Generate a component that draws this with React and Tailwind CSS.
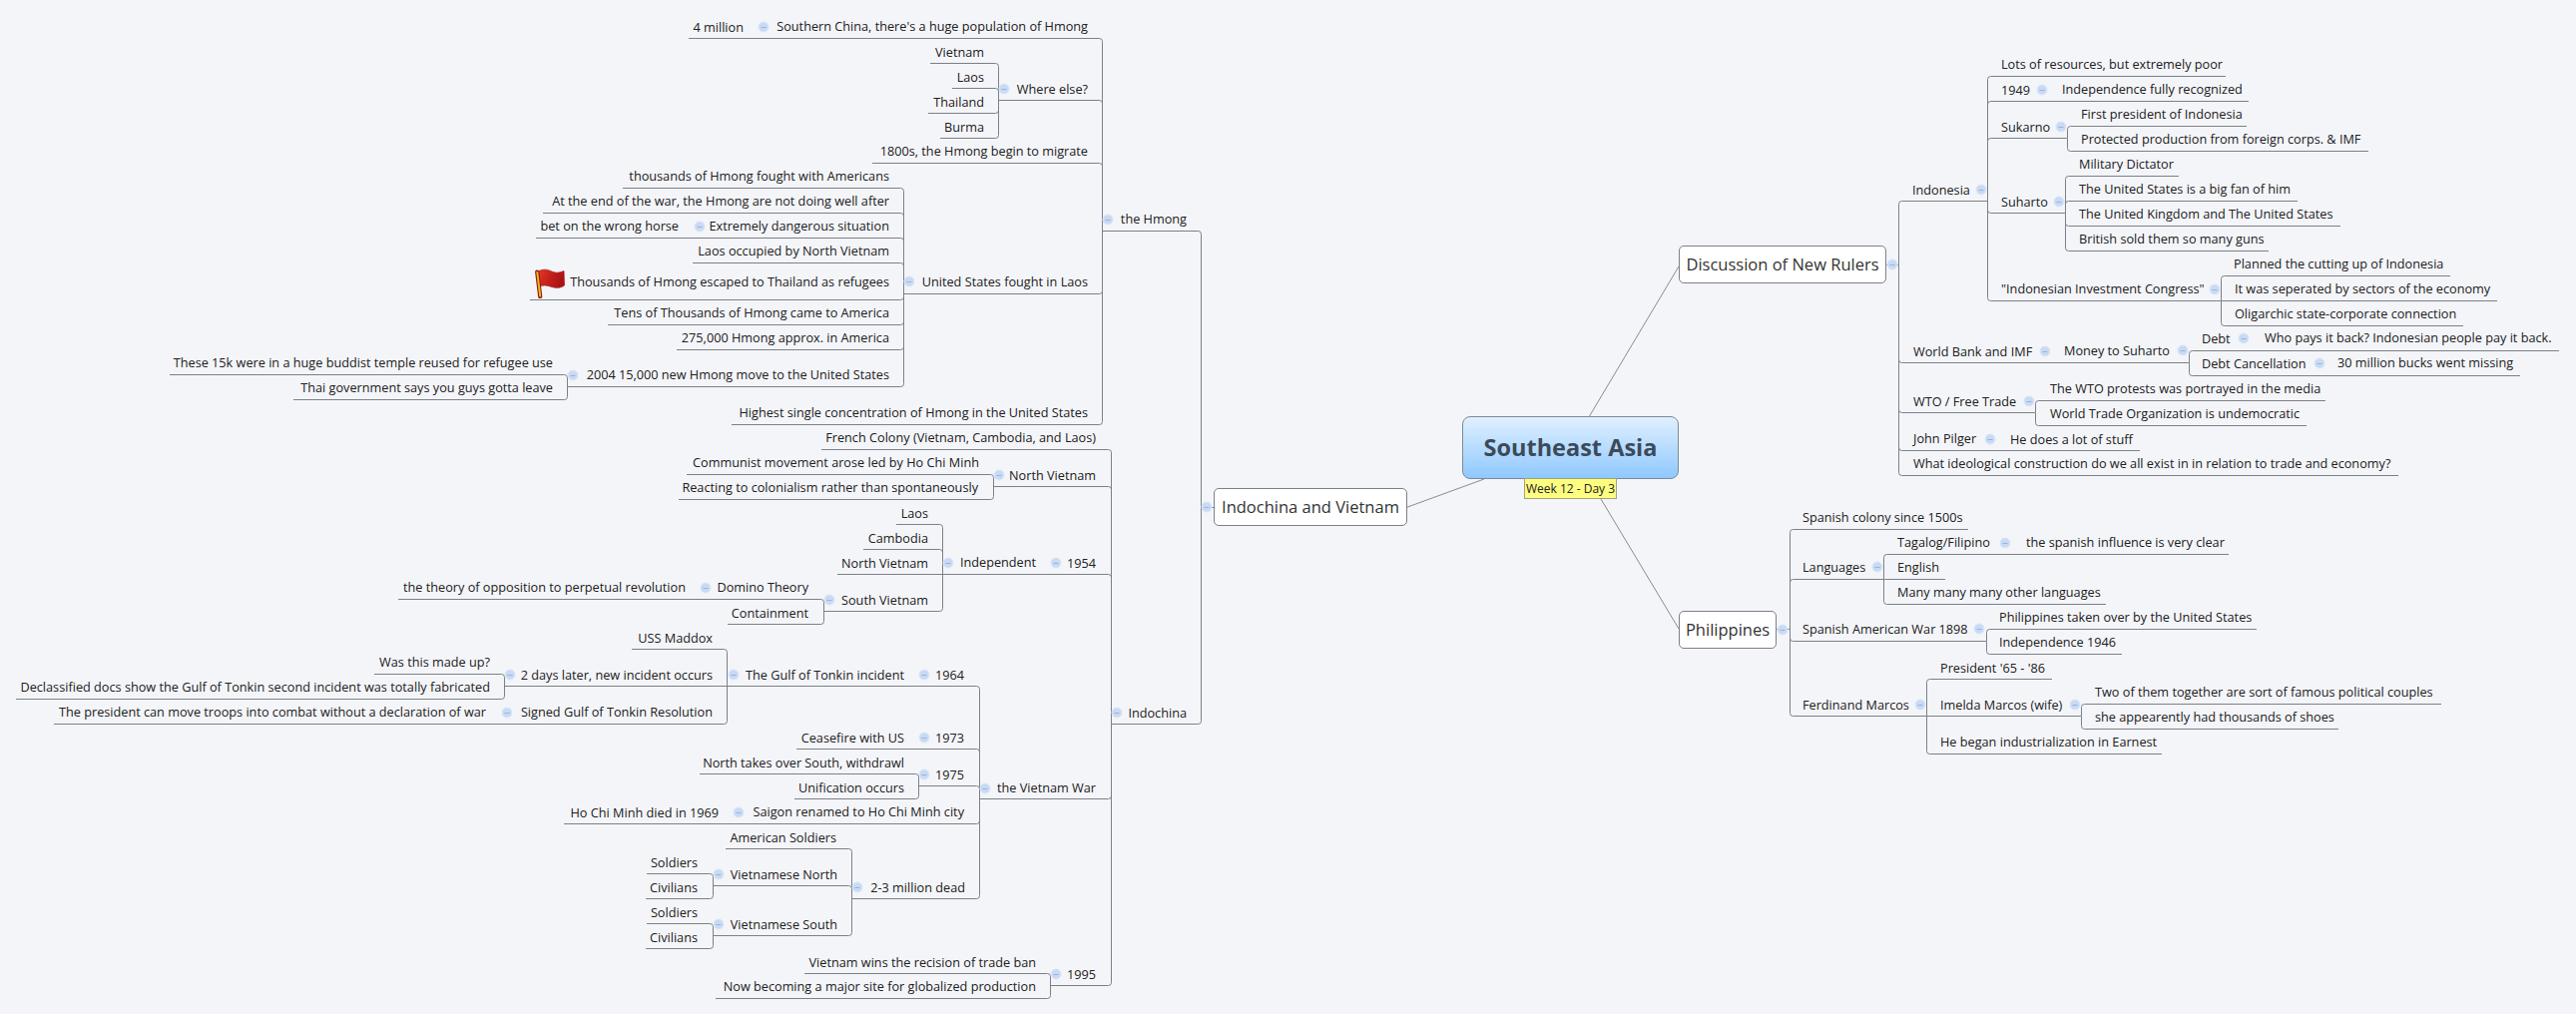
import React from 'react';

// [spine x, y where the parent joins, [[far end x, y], ...]]
const branches = [
    [1203, 508, [[1104, 231], [1113, 725]]],
    [1104, 231, [[690, 38], [1000, 100], [874, 163], [905, 294], [733, 425]]],
    [1000, 100, [[932, 63], [954, 88], [930, 113], [942, 138]]],
    [905, 294, [[624, 188], [544, 213], [537, 238], [694, 263], [531, 300], [609, 325], [678, 350], [568, 387]]],
    [568, 387, [[170, 375], [294, 400]]],
    [1113, 725, [[823, 450], [995, 487], [944, 575], [981, 800], [1052, 987]]],
    [995, 487, [[688, 475], [680, 500]]],
    [944, 575, [[898, 525], [865, 550], [839, 575], [825, 612]]],
    [825, 612, [[399, 600], [729, 625]]],
    [981, 800, [[728, 687], [798, 750], [920, 787], [565, 825], [853, 900]]],
    [728, 687, [[633, 650], [505, 687], [54, 725]]],
    [505, 687, [[375, 675], [16, 700]]],
    [920, 787, [[701, 775], [796, 800]]],
    [853, 900, [[727, 850], [714, 887], [714, 937]]],
    [714, 887, [[648, 875], [647, 900]]],
    [714, 937, [[648, 925], [647, 950]]],
    [1052, 987, [[806, 975], [717, 1000]]],
    [1902, 265, [[1991, 201], [2193, 363], [2039, 413], [2144, 451], [2403, 476]]],
    [1991, 201, [[2230, 76], [2253, 101], [2071, 138], [2069, 213], [2225, 301]]],
    [2071, 138, [[2251, 126], [2373, 151]]],
    [2069, 213, [[2183, 176], [2302, 201], [2345, 226], [2273, 251]]],
    [2225, 301, [[2455, 276], [2502, 301], [2468, 326]]],
    [2193, 363, [[2564, 351], [2525, 376]]],
    [2039, 413, [[2330, 401], [2311, 426]]],
    [1793, 630, [[1972, 530], [1887, 580], [1990, 642], [1930, 717]]],
    [1887, 580, [[2233, 555], [1949, 580], [2110, 605]]],
    [1990, 642, [[2261, 630], [2126, 655]]],
    [1930, 717, [[2056, 680], [2085, 717], [2166, 755]]],
    [2085, 717, [[2446, 705], [2343, 730]]],
];

// left side of the map: x is where the text ends
const leftLabels = [
    [745, 27, '4 million'], [1090, 26, "Southern China, there's a huge population of Hmong"],
    [986, 52, 'Vietnam'], [986, 77, 'Laos'], [986, 102, 'Thailand'], [986, 127, 'Burma'],
    [1090, 89, 'Where else?'], [1090, 151, '1800s, the Hmong begin to migrate'],
    [891, 176, 'thousands of Hmong fought with Americans'],
    [891, 201, 'At the end of the war, the Hmong are not doing well after'],
    [680, 226, 'bet on the wrong horse'], [891, 226, 'Extremely dangerous situation'],
    [891, 251, 'Laos occupied by North Vietnam'],
    [891, 282, 'Thousands of Hmong escaped to Thailand as refugees'],
    [891, 313, 'Tens of Thousands of Hmong came to America'],
    [891, 338, '275,000 Hmong approx. in America'],
    [891, 375, '2004 15,000 new Hmong move to the United States'],
    [554, 363, 'These 15k were in a huge buddist temple reused for refugee use'],
    [554, 388, 'Thai government says you guys gotta leave'],
    [1090, 282, 'United States fought in Laos'],
    [1090, 413, 'Highest single concentration of Hmong in the United States'],
    [1189, 219, 'the Hmong'], [1189, 714, 'Indochina'],
    [1098, 438, 'French Colony (Vietnam, Cambodia, and Laos)'],
    [1098, 476, 'North Vietnam'],
    [981, 463, 'Communist movement arose led by Ho Chi Minh'],
    [980, 488, 'Reacting to colonialism rather than spontaneously'],
    [930, 514, 'Laos'], [930, 539, 'Cambodia'], [930, 564, 'North Vietnam'], [930, 601, 'South Vietnam'],
    [1038, 563, 'Independent'], [1098, 564, '1954'],
    [687, 588, 'the theory of opposition to perpetual revolution'],
    [810, 588, 'Domino Theory'], [810, 614, 'Containment'],
    [714, 639, 'USS Maddox'], [714, 676, '2 days later, new incident occurs'],
    [491, 663, 'Was this made up?'],
    [491, 688, 'Declassified docs show the Gulf of Tonkin second incident was totally fabricated'],
    [487, 713, 'The president can move troops into combat without a declaration of war'],
    [714, 713, 'Signed Gulf of Tonkin Resolution'],
    [906, 676, 'The Gulf of Tonkin incident'], [966, 676, '1964'],
    [906, 739, 'Ceasefire with US'], [966, 739, '1973'], [966, 776, '1975'],
    [906, 764, 'North takes over South, withdrawl'], [906, 789, 'Unification occurs'],
    [720, 814, 'Ho Chi Minh died in 1969'], [966, 813, 'Saigon renamed to Ho Chi Minh city'],
    [967, 889, '2-3 million dead'], [1098, 789, 'the Vietnam War'],
    [838, 839, 'American Soldiers'], [839, 876, 'Vietnamese North'], [839, 926, 'Vietnamese South'],
    [699, 864, 'Soldiers'], [699, 889, 'Civilians'], [699, 914, 'Soldiers'], [699, 939, 'Civilians'],
    [1038, 964, 'Vietnam wins the recision of trade ban'],
    [1038, 988, 'Now becoming a major site for globalized production'],
    [1098, 976, '1995'],
];

// right side of the map: x is where the text starts
const rightLabels = [
    [1916, 190, 'Indonesia'],
    [2005, 64, 'Lots of resources, but extremely poor'],
    [2005, 90, '1949'], [2066, 89, 'Independence fully recognized'],
    [2005, 127, 'Sukarno'], [2085, 114, 'First president of Indonesia'],
    [2085, 139, 'Protected production from foreign corps. & IMF'],
    [2005, 202, 'Suharto'], [2083, 164, 'Military Dictator'],
    [2083, 189, 'The United States is a big fan of him'],
    [2083, 214, 'The United Kingdom and The United States'],
    [2083, 239, 'British sold them so many guns'],
    [2005, 289, '"Indonesian Investment Congress"'],
    [2238, 264, 'Planned the cutting up of Indonesia'],
    [2239, 289, 'It was seperated by sectors of the economy'],
    [2239, 314, 'Oligarchic state-corporate connection'],
    [1917, 352, 'World Bank and IMF'], [2068, 351, 'Money to Suharto'],
    [2206, 339, 'Debt'], [2269, 338, 'Who pays it back? Indonesian people pay it back.'],
    [2206, 364, 'Debt Cancellation'], [2342, 363, '30 million bucks went missing'],
    [1917, 402, 'WTO / Free Trade'], [2054, 389, 'The WTO protests was portrayed in the media'],
    [2054, 414, 'World Trade Organization is undemocratic'],
    [1917, 439, 'John Pilger'], [2014, 440, 'He does a lot of stuff'],
    [1917, 464, 'What ideological construction do we all exist in in relation to trade and economy?'],
    [1806, 518, 'Spanish colony since 1500s'], [1806, 568, 'Languages'],
    [1901, 543, 'Tagalog/Filipino'], [2030, 543, 'the spanish influence is very clear'],
    [1901, 568, 'English'], [1901, 593, 'Many many many other languages'],
    [1806, 630, 'Spanish American War 1898'],
    [2003, 618, 'Philippines taken over by the United States'], [2003, 643, 'Independence 1946'],
    [1806, 706, 'Ferdinand Marcos'], [1944, 669, "President '65 - '86"],
    [1944, 706, 'Imelda Marcos (wife)'], [1944, 743, 'He began industrialization in Earnest'],
    [2099, 693, 'Two of them together are sort of famous political couples'],
    [2099, 718, 'she appearently had thousands of shoes'],
];

const minusIcons = [
    [765, 27], [1006, 89], [701, 227], [911, 282], [574, 376], [1110, 220], [1209, 508], [1119, 714],
    [1001, 476], [950, 564], [1058, 564], [831, 601], [707, 589], [926, 676], [735, 676], [511, 676],
    [508, 714], [926, 739], [926, 776], [740, 814], [987, 790], [859, 889], [720, 876], [720, 926],
    [1058, 976], [1896, 265], [1985, 190], [2046, 90], [2065, 127], [2063, 202], [2219, 290],
    [2049, 352], [2187, 351], [2248, 339], [2324, 364], [2033, 402], [1994, 440], [1786, 631],
    [1881, 568], [2009, 544], [1983, 630], [1924, 706], [2079, 706],
];

function branchPath([sx, py, kids]) {
    const x0 = sx + 0.5;
    return kids.map(([x, y]) => {
        const s = Math.sign(x0 - x);
        const d = Math.sign(py - y);
        const yy = y + 0.5;
        if (d === 0) return `M${x} ${yy}H${x0}`;
        return `M${x} ${yy}H${x0 - s * 3}Q${x0} ${yy} ${x0} ${yy + d * 3}V${py + 0.5}`;
    }).join('');
}

function Minus({ x, y }) {
    return (
        <svg width="12" height="12" viewBox="0 0 12 12" className="absolute" style={{ left: x - 6, top: y - 6 }}>
            <circle cx="6" cy="6" r="5" fill="#c8daf4" stroke="#dce7f7" />
            <path d="M3.500 6.500h5" stroke="#9ab4da" strokeWidth="1" />
        </svg>
    );
}

function Flag() {
    return (
        <svg width="30" height="30" viewBox="0 0 30 30" className="absolute left-[536px] top-[269px]">
            <defs>
                <linearGradient id="flagRed" x1="0" y1="0" x2="1" y2="0.3">
                    <stop offset="0" stopColor="#e03a22" />
                    <stop offset="0.55" stopColor="#c4201a" />
                    <stop offset="1" stopColor="#a81414" />
                </linearGradient>
            </defs>
            <path d="M3 3C9 0 13 1 18 3.500C22 5 25 4 29 2.500L29.500 17C26 19.500 22 20 17 18.500C12 17 9 16 5 18Z" fill="url(#flagRed)" stroke="#b0201a" strokeWidth="0.8" />
            <path d="M2.200 3.500L5.200 28" stroke="#8c1f14" strokeWidth="4.200" strokeLinecap="round" />
            <path d="M2.300 4L5.200 27.500" stroke="#f3b61f" strokeWidth="2" strokeLinecap="round" />
        </svg>
    );
}

export default function App() {
    return (
        <div className="relative w-[2581px] h-[1016px] overflow-hidden bg-[#f4f5f9] text-[#202020] text-[12.7px] leading-none [font-family:'Open_Sans',sans-serif]">
            <svg width="2581" height="1016" className="absolute inset-0" fill="none" stroke="#7d8086">
                <path d="M1592.500 417L1682 267M1487 480L1409 508.500M1604 500L1682 630" strokeOpacity="0.9" />
                <path d="M1216 508.500H1203M1890 265.500H1902M1779 630.500H1793" />
                {branches.map((b, i) => (
                    <path key={i} d={branchPath(b)} />
                ))}
            </svg>

            {leftLabels.map(([x, y, text], i) => (
                <span key={i} className="absolute whitespace-nowrap -translate-x-full -translate-y-1/2" style={{ left: x, top: y }}>
                    {text}
                </span>
            ))}
            {rightLabels.map(([x, y, text], i) => (
                <span key={i} className="absolute whitespace-nowrap -translate-y-1/2" style={{ left: x, top: y }}>
                    {text}
                </span>
            ))}

            {minusIcons.map(([x, y], i) => (
                <Minus key={i} x={x} y={y} />
            ))}

            <Flag />

            {/* main topics */}
            <div className="absolute left-[1216px] top-[489px] w-[194px] h-[38px] flex items-center justify-center whitespace-nowrap bg-white border border-[#7d8086] rounded-[5px] text-[#333] text-[16.500px]">
                Indochina and Vietnam
            </div>
            <div className="absolute left-[1682px] top-[246px] w-[208px] h-[38px] flex items-center justify-center whitespace-nowrap bg-white border border-[#7d8086] rounded-[5px] text-[#333] text-[16.500px]">
                Discussion of New Rulers
            </div>
            <div className="absolute left-[1682px] top-[612px] w-[98px] h-[38px] flex items-center justify-center whitespace-nowrap bg-white border border-[#7d8086] rounded-[5px] text-[#333] text-[16.500px]">
                Philippines
            </div>

            {/* central topic */}
            <div className="absolute left-[1465px] top-[417px] w-[217px] h-[63px] flex items-center justify-center rounded-[8px] border border-[#7d8a99] bg-gradient-to-b from-[#e0f0ff] to-[#8fc8ff] text-[#3b4a5a] text-[23.500px] font-bold">
                Southeast Asia
            </div>
            <div className="absolute left-[1527px] top-[479px] w-[93px] h-[21px] flex items-center justify-center bg-[#fdfd80] border border-[#a3a37a] text-[12px] text-[#222]">
                Week 12 - Day 3
            </div>
        </div>
    );
}
